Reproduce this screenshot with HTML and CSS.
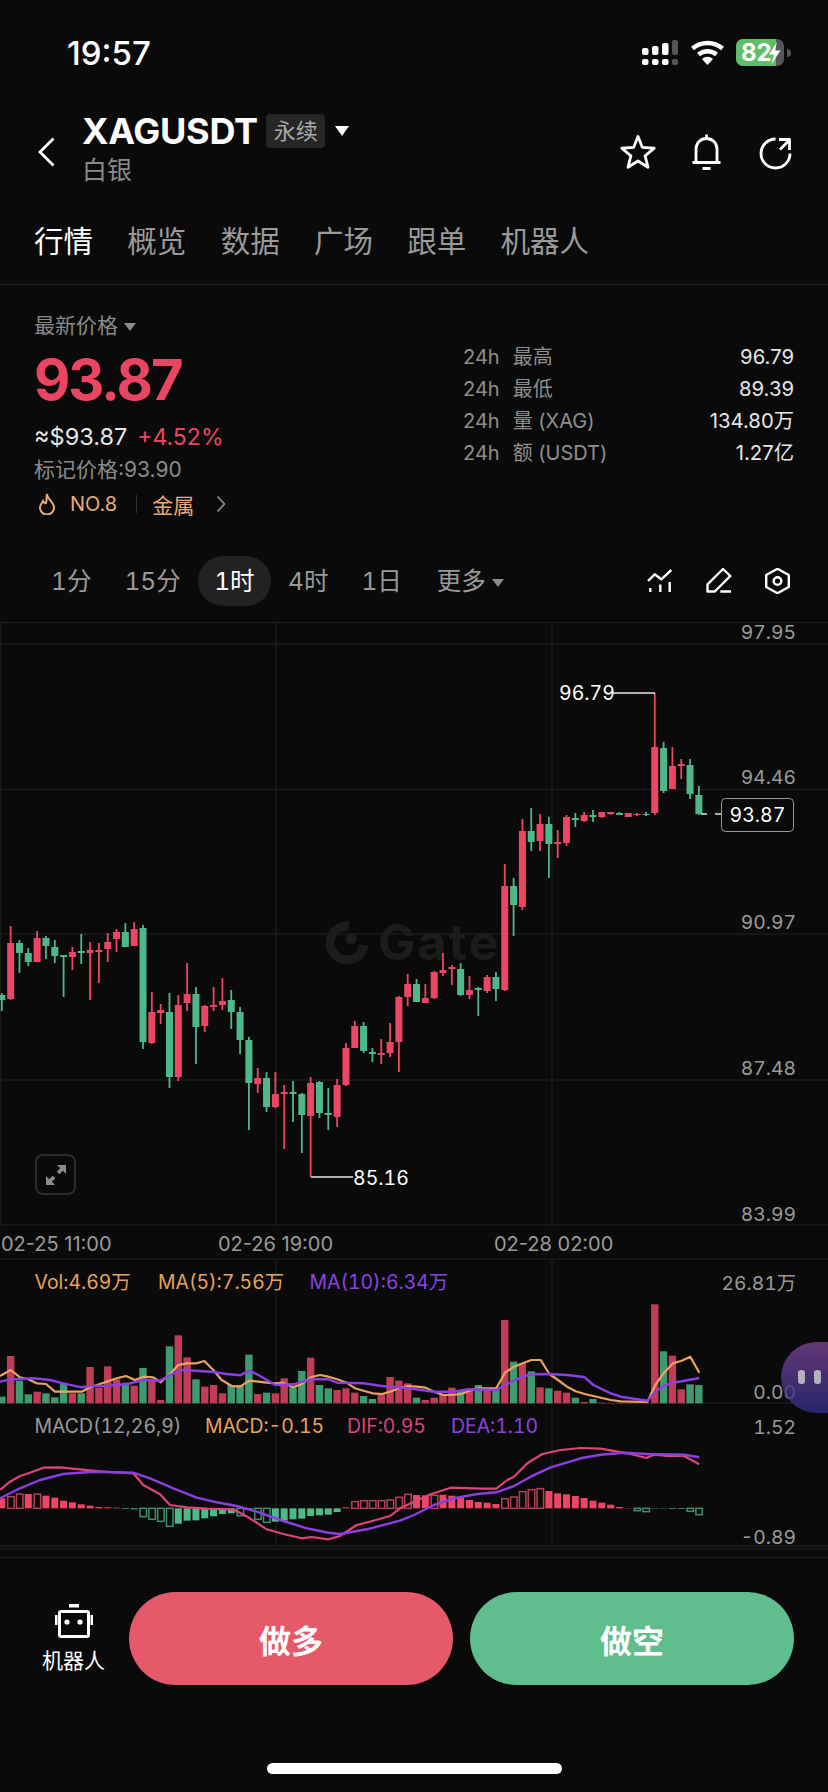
FILE: index.html
```html
<!DOCTYPE html>
<html lang="zh-CN">
<head>
    <meta charset="UTF-8">
    <meta name="viewport" content="width=device-width, initial-scale=1.0">
    <title>XAGUSDT</title>
    <link rel="stylesheet" href="styles.css">
</head>
<body>

    <div class="page">

        <div class="status">
            <span class="time">19:57</span>
            <svg class="status-icons" width="152" height="30" viewBox="640 38 152 30">
                <g fill="#fff">
                    <rect x="642" y="48" width="6.5" height="7" rx="2"/>
                    <rect x="652" y="46" width="6.5" height="9" rx="2"/>
                    <rect x="662" y="43" width="6.5" height="12" rx="2"/>
                    <rect x="642" y="59" width="6.5" height="6" rx="2"/>
                    <rect x="652" y="59" width="6.5" height="6" rx="2"/>
                    <rect x="662" y="59" width="6.5" height="6" rx="2"/>
                </g>
                <g fill="#555">
                    <rect x="672" y="40" width="6" height="15" rx="2"/>
                    <rect x="672" y="59" width="6" height="6" rx="2"/>
                </g>
                <g fill="none" stroke="#fff" stroke-width="4.4">
                    <path d="M692.5 48.5a23 23 0 0 1 30 0"/>
                    <path d="M698.5 54.5a14 14 0 0 1 18 0"/>
                </g>
                <path d="M702 59a8 8 0 0 1 11 0l-5.5 6z" fill="#fff"/>
                <rect x="736" y="39" width="48" height="27" rx="7" fill="#565656"/>
                <path d="M743 39h33v27h-33a7 7 0 0 1-7-7v-13a7 7 0 0 1 7-7z" fill="#62bd69"/>
                <path d="M787 49a4 4 0 0 1 0 8z" fill="#565656"/>
                <text class="batt" x="741" y="61">82</text>
                <path d="M777 42l-8 12.500h5l-2.500 9.500 9-13.500h-5.500z" fill="#fff"/>
            </svg>
        </div>

        <div class="header">
            <svg class="back" width="17" height="30" viewBox="0 0 17 30"><path d="M15.500 1.500L2 15l13.500 13.500" fill="none" stroke="#fff" stroke-width="2.800"/></svg>
            <div class="title-block">
                <div class="title-line">
                    <span class="title">XAGUSDT</span>
                    <span class="tag">永续</span>
                    <span class="caret caret-big"></span>
                </div>
                <div class="subtitle">白银</div>
            </div>
            <div class="actions">
                <svg width="36" height="36" viewBox="0 0 36 36"><path d="M18 2.500L22.400 13.400 34.200 14.250 25.100 21.800 28 33.250 18 27 8 33.250 10.900 21.800 1.800 14.250 13.600 13.400z"/></svg>
                <svg width="36" height="36" viewBox="0 0 36 36"><path d="M7 28.500V15a10.500 10.500 0 0 1 21 0v13.500M3.500 28.500h28M17.500 0.500V4.500M13.500 34.500h8"/></svg>
                <svg width="36" height="36" viewBox="0 0 36 36"><path d="M17.500 5A14.500 14.500 0 1 0 32 19.500M22 15.500L31.500 6M21 5.500h10.500V16"/></svg>
            </div>
        </div>

        <div class="tabs">
            <span class="tab active">行情</span>
            <span class="tab">概览</span>
            <span class="tab">数据</span>
            <span class="tab">广场</span>
            <span class="tab">跟单</span>
            <span class="tab">机器人</span>
        </div>

        <div class="summary">
            <div class="price-col">
                <div class="price-label">最新价格 <span class="caret"></span></div>
                <div class="price">93.87</div>
                <div class="price-sub"><span>≈$93.87</span><span class="red">+4.52%</span></div>
                <div class="mark">标记价格:93.90</div>
                <div class="hot">
                    <svg width="18" height="22" viewBox="0 0 18 22"><path d="M9 1C9 6 16 9 16 14.500A7 7 0 0 1 2 14.500C2 12 4 10 5 8C6 10 7 10.500 8 10C9 7 8 4 9 1Z" fill="none" stroke="#e8ab78" stroke-width="2"/></svg>
                    <span class="no">NO.8</span>
                    <span class="sep"></span>
                    <span class="cat">金属</span>
                    <svg class="hot-arrow" width="10" height="18" viewBox="0 0 10 18"><path d="M1.500 1.500L8.500 9l-7 7.500" fill="none" stroke="#8a8a8a" stroke-width="1.800"/></svg>
                </div>
            </div>
            <div class="stats">
                <div class="stat"><span class="stat-key"><i>24h</i>最高</span><span>96.79</span></div>
                <div class="stat"><span class="stat-key"><i>24h</i>最低</span><span>89.39</span></div>
                <div class="stat"><span class="stat-key"><i>24h</i>量 (XAG)</span><span>134.80万</span></div>
                <div class="stat"><span class="stat-key"><i>24h</i>额 (USDT)</span><span>1.27亿</span></div>
            </div>
        </div>

        <div class="periods">
            <span class="period">1分</span>
            <span class="period">15分</span>
            <span class="period active">1时</span>
            <span class="period">4时</span>
            <span class="period">1日</span>
            <span class="period period-more">更多 <span class="caret"></span></span>
            <div class="tools">
                <svg width="26" height="26" viewBox="0 0 26 26"><path d="M1 13L7.700 6.300 14.300 11.300 24.300 2M3.300 20v4M13.300 16.500V24M22.700 14v10"/></svg>
                <svg width="26" height="26" viewBox="0 0 26 26"><path d="M1.500 23V16.300L17 1 24.300 8 8.800 23.500H1.500zM14.300 23.500H25"/></svg>
                <svg width="26" height="26" viewBox="0 0 26 26"><path d="M12.500 0.800L23.800 7V19L12.500 25.200 1.200 19V7z"/><circle cx="12.500" cy="13" r="3.800"/></svg>
            </div>
        </div>

        <div class="chart">
            <svg id="chart" width="828" height="936" viewBox="0 622 828 936">
                <g id="grid"></g>
                <g class="watermark">
                    <path d="M349 926A17 17 0 1 0 364 945" fill="none" stroke="#1c1c1c" stroke-width="9"/>
                    <circle cx="351" cy="939" r="5.500" fill="#1c1c1c"/>
                    <text x="378" y="960">Gate</text>
                </g>
                <g id="candles"></g>
                <g id="volume"></g>
                <g id="macd"></g>

                <path class="marker" d="M613 693H655M311 1177H353"/>
                <path class="marker dashed" d="M701 814H721"/>
                <text class="mark-val" x="559" y="700">96.79</text>
                <text class="mark-val" x="353" y="1185">85.16</text>
                <rect class="last-box" x="721.500" y="798.500" width="72" height="33" rx="4"/>
                <text class="mark-val middle" x="757.500" y="822">93.87</text>

                <text class="axis" x="796" y="639">97.95</text>
                <text class="axis" x="796" y="784">94.46</text>
                <text class="axis" x="796" y="929">90.97</text>
                <text class="axis" x="796" y="1075">87.48</text>
                <text class="axis" x="796" y="1221">83.99</text>
                <text class="axis date" x="1" y="1251">02-25 11:00</text>
                <text class="axis date" x="218" y="1251">02-26 19:00</text>
                <text class="axis date" x="494" y="1251">02-28 02:00</text>

                <text class="legend orange" x="34.500" y="1289">Vol:4.69万</text>
                <text class="legend orange" x="158" y="1289">MA(5):7.56万</text>
                <text class="legend purple" x="309.500" y="1289">MA(10):6.34万</text>
                <text class="axis" x="796" y="1290">26.81万</text>
                <text class="axis" x="796" y="1399">0.00</text>

                <text class="legend gray" x="34.500" y="1433">MACD(12,26,9)</text>
                <text class="legend orange" x="205" y="1433">MACD:-0.15</text>
                <text class="legend pink" x="347" y="1433">DIF:0.95</text>
                <text class="legend purple" x="451" y="1433">DEA:1.10</text>
                <text class="axis" x="796" y="1434">1.52</text>
                <text class="axis" x="796" y="1544">-0.89</text>
            </svg>

            <div class="expand">
                <svg width="22" height="22" viewBox="0 0 22 22" fill="#8c8c8c">
                    <path d="M21 1v9l-3.200-3.200-3.400 3.400-2.600-2.600 3.400-3.400L12 1z"/>
                    <path d="M1 21v-9l3.200 3.200 3.400-3.400 2.600 2.600-3.400 3.400L10 21z"/>
                </svg>
            </div>

            <div class="bubble"><span></span><span></span></div>
        </div>

        <div class="bottom">
            <div class="robot">
                <svg width="40" height="34" viewBox="0 0 40 34">
                    <rect x="15" y="0" width="10" height="3.500" fill="#fff"/>
                    <rect x="5.500" y="7.500" width="29" height="25" rx="1.500" fill="none" stroke="#fff" stroke-width="3"/>
                    <rect x="1" y="11" width="2.500" height="10" fill="#fff"/>
                    <rect x="36.500" y="11" width="2.500" height="10" fill="#fff"/>
                    <circle cx="13" cy="18" r="2.600" fill="#fff"/>
                    <circle cx="26" cy="18" r="2.600" fill="#fff"/>
                </svg>
                <span>机器人</span>
            </div>
            <button class="trade long">做多</button>
            <button class="trade short">做空</button>
        </div>

        <div class="home-bar"></div>
    </div>

    <script src="chart.js"></script>
</body>
</html>
```

FILE: styles.css
```css
* {
    box-sizing: border-box;
}

body {
    margin: 0;
    background-color: #0a0a0a;
    color: #fff;
    font-family: Inter, "Noto Sans CJK SC", sans-serif;
    overflow: hidden;
}

.page {
    width: 828px;
    height: 1792px;
    overflow: hidden;
    display: flex;
    flex-direction: column;
}

.red {
    color: #ea4663;
}

.caret {
    display: inline-block;
    width: 0;
    height: 0;
    border-left: 6px solid transparent;
    border-right: 6px solid transparent;
    border-top: 8px solid #8c8c8c;
    vertical-align: middle;
}

.caret-big {
    border-left-width: 7.5px;
    border-right-width: 7.5px;
    border-top: 10px solid #fff;
    margin-left: 10px;
}

/* status bar */
.status {
    height: 106px;
    display: flex;
    align-items: center;
    justify-content: space-between;
    padding: 0 36px 0 67px;
}

.time {
    font-size: 33px;
    font-weight: 500;
}

.batt {
    font-size: 24px;
    font-weight: 700;
    fill: #fff;
}

/* header */
.header {
    height: 92px;
    display: flex;
    align-items: center;
    padding: 0 34px 0 38px;
}

.back {
    margin-right: 27px;
}

.title-block {
    margin-bottom: 4px;
}

.title-line {
    height: 40px;
    display: flex;
    align-items: center;
}

.title {
    font-size: 36px;
    font-weight: 700;
    letter-spacing: -0.3px;
}

.tag {
    height: 34px;
    width: 59px;
    margin-left: 8.500px;
    background-color: #262626;
    border-radius: 4px;
    color: #aaa;
    font-size: 22px;
    line-height: 34px;
    text-align: center;
}

.subtitle {
    height: 38px;
    line-height: 38px;
    color: #8a8a8a;
    font-size: 25px;
}

.actions {
    margin-left: auto;
    display: flex;
    gap: 33px;
}

.actions svg {
    fill: none;
    stroke: #fff;
    stroke-width: 2.8;
    stroke-linejoin: round;
}

/* tabs */
.tabs {
    height: 87px;
    display: flex;
    align-items: center;
    gap: 34.300px;
    padding: 0 0 4px 34px;
    border-bottom: 1px solid #232323;
}

.tab {
    color: #9a9a9a;
    font-size: 29.500px;
}

.tab.active {
    color: #fff;
}

/* price summary */
.summary {
    display: flex;
    justify-content: space-between;
    padding: 26px 34px 0 34px;
}

.price-label {
    height: 30px;
    line-height: 30px;
    color: #8a8a8a;
    font-size: 21px;
}

.price {
    height: 64px;
    margin-top: 7px;
    line-height: 64px;
    color: #ea4663;
    font-size: 56px;
    font-weight: 700;
    letter-spacing: -2px;
}

.price-sub {
    height: 32px;
    margin-top: 9px;
    line-height: 32px;
    color: #e6e6e6;
    font-size: 23.500px;
    display: flex;
    gap: 10px;
}

.price-sub .red {
    font-size: 23px;
}

.mark {
    height: 30px;
    margin-top: 2px;
    line-height: 30px;
    color: #8a8a8a;
    font-size: 21px;
}

.hot {
    height: 30px;
    margin-top: 4px;
    padding-left: 4px;
    display: flex;
    align-items: center;
    color: #e8ab78;
    font-size: 20px;
}

.no {
    margin-left: 14px;
}

.sep {
    width: 1px;
    height: 18px;
    margin: 0 15px 0 19px;
    background-color: #333;
}

.cat {
    font-size: 21px;
}

.hot-arrow {
    margin-left: 22px;
}

.stats {
    width: 331px;
    padding-top: 30px;
}

.stat {
    height: 32px;
    line-height: 32px;
    display: flex;
    justify-content: space-between;
    color: #e6e6e6;
    font-size: 20.300px;
}

.stat-key {
    color: #8f8f8f;
    font-size: 20px;
}

.stat-key i {
    font-style: normal;
    margin-right: 13px;
}

/* period row */
.periods {
    height: 50px;
    margin-top: 37px;
    margin-bottom: 16px;
    padding: 0 37px 0 35px;
    display: flex;
    align-items: center;
    gap: 1px;
}

.period {
    height: 50px;
    padding: 0 16px;
    line-height: 50px;
    border-radius: 25px;
    color: #9a9a9a;
    font-size: 24.500px;
    font-variant-numeric: tabular-nums;
    white-space: nowrap;
}

.period.active {
    padding: 0 16.500px;
    background-color: #222;
    color: #fff;
}

.period-more {
    margin-left: 2px;
}

.tools {
    margin-left: auto;
    display: flex;
    gap: 33px;
}

.tools svg {
    fill: none;
    stroke: #fff;
    stroke-width: 2.4;
    stroke-linejoin: round;
}

/* chart */
.chart {
    position: relative;
    height: 936px;
}

#chart {
    display: block;
    overflow: visible;
}

#chart text {
    font-family: Inter, "Noto Sans CJK SC", sans-serif;
    font-variant-numeric: tabular-nums;
}

.grid-line {
    stroke: #1b1b1b;
    stroke-width: 1.5;
}

.watermark text {
    fill: #1c1c1c;
    font-size: 50px;
    font-weight: 700;
    letter-spacing: 2px;
}

.wick {
    stroke-width: 1.800;
}

.up {
    fill: #4fb88b;
    stroke: #4fb88b;
}

.down {
    fill: #ec4664;
    stroke: #ec4664;
}

.body {
    stroke: none;
}

.vol-up {
    fill: #3f9a72;
}

.vol-down {
    fill: #c03c57;
}

.line {
    fill: none;
    stroke-width: 2.200;
    stroke-linejoin: round;
}

.line-orange {
    stroke: #eba45e;
}

.line-purple {
    stroke: #8b3fe0;
    stroke-width: 2.400;
}

.line-pink {
    stroke: #dc4578;
}

.hollow {
    fill: none;
    stroke-width: 1.500;
}

.hollow-up {
    stroke: #3f8f6c;
}

.hollow-down {
    stroke: #b63f58;
}

.marker {
    fill: none;
    stroke: #e6e6e6;
    stroke-width: 1.500;
}

.dashed {
    stroke-dasharray: 6 8;
}

.mark-val {
    fill: #fff;
    font-size: 19.500px;
}

.middle {
    text-anchor: middle;
}

.last-box {
    fill: #0a0a0a;
    stroke: #999;
    stroke-width: 1;
}

.axis {
    fill: #9a9a9a;
    font-size: 19.300px;
    text-anchor: end;
}

#chart .axis.date {
    font-size: 20px;
    font-variant-numeric: normal;
    text-anchor: start;
}

.legend {
    font-size: 19.400px;
}

.orange {
    fill: #e8a35f;
}

.purple {
    fill: #8b44e0;
}

.gray {
    fill: #9a9a9a;
}

.pink {
    fill: #d8447c;
}

.expand {
    position: absolute;
    left: 35px;
    top: 532px;
    width: 41px;
    height: 41px;
    border: 2px solid #2c2c2c;
    border-radius: 8px;
    display: flex;
    align-items: center;
    justify-content: center;
}

.bubble {
    position: absolute;
    left: 781px;
    top: 720px;
    width: 47px;
    height: 71px;
    border-radius: 36px 0 0 36px;
    background: linear-gradient(#7a4390, #2e2e80);
    opacity: 0.8;
    padding: 28px 0 0 17px;
    display: flex;
    gap: 9px;
}

.bubble span {
    width: 7px;
    height: 14px;
    border-radius: 3px;
    background-color: #e0dbea;
}

/* bottom bar */
.bottom {
    padding: 34px 34px 0;
    display: flex;
    align-items: center;
    gap: 17px;
}

.robot {
    width: 79px;
    margin-right: -1px;
    display: flex;
    flex-direction: column;
    align-items: center;
    gap: 6px;
    font-size: 21px;
}

.trade {
    flex: 1;
    height: 93px;
    border: none;
    border-radius: 47px;
    color: #fff;
    font-family: inherit;
    font-size: 32px;
    font-weight: 700;
}

.long {
    background-color: #e5596a;
}

.short {
    background-color: #60bd8c;
}

.home-bar {
    width: 295px;
    height: 11px;
    margin: 78px auto 0;
    background-color: #fff;
    border-radius: 6px;
}
```

FILE: chart.js
```js
const NS = 'http://www.w3.org/2000/svg';

function add(parentId, tag, attrs) {
    const el = document.createElementNS(NS, tag);
    for (const key in attrs) {
        el.setAttribute(key, attrs[key]);
    }
    document.getElementById(parentId).appendChild(el);
}

// every candle sits on the same step, 8.82px apart
function slotX(i) {
    return (5.5 + 26.47 * i) / 3;
}

// grid
const hLines = [622.5, 644, 789.5, 934, 1080, 1225, 1259, 1403, 1546, 1549, 1557.5];
hLines.forEach(y => add('grid', 'line', { class: 'grid-line', x1: 0, x2: 828, y1: y, y2: y }));
[276, 552].forEach(x => {
    add('grid', 'line', { class: 'grid-line', x1: x, x2: x, y1: 622, y2: 1225 });
    add('grid', 'line', { class: 'grid-line', x1: x, x2: x, y1: 1259, y2: 1546 });
});
add('grid', 'line', { class: 'grid-line', x1: 0.5, x2: 0.5, y1: 622, y2: 1225 });

// candles: dir, high, body top, body bottom, low
const candles = [
    ['u', 993, 995, 1000, 1011], ['d', 926, 943, 999, 1000], ['u', 940, 943, 953, 973], ['u', 948, 953, 962, 966],
    ['d', 931, 938, 962, 962], ['u', 936, 938, 946, 959], ['u', 940, 947, 956, 963], ['u', 955, 955, 957, 997],
    ['d', 947, 952, 957, 970], ['u', 934, 951, 953, 964], ['d', 942, 950, 953, 1000], ['d', 943, 950, 952, 983],
    ['d', 933, 942, 949, 962], ['d', 929, 932, 939, 952], ['u', 923, 932, 947, 947], ['d', 922, 929, 946, 946],
    ['u', 925, 928, 1042, 1049], ['d', 992, 1012, 1043, 1044], ['d', 1004, 1010, 1013, 1024], ['u', 993, 1012, 1077, 1088],
    ['d', 995, 1005, 1077, 1081], ['d', 963, 994, 1003, 1011], ['u', 987, 994, 1027, 1064], ['d', 1005, 1006, 1026, 1032],
    ['d', 987, 1005, 1007, 1011], ['d', 978, 1001, 1005, 1010], ['u', 990, 1000, 1012, 1029], ['u', 1007, 1012, 1040, 1054],
    ['u', 1037, 1040, 1083, 1130], ['d', 1068, 1078, 1084, 1093], ['u', 1072, 1078, 1107, 1112], ['d', 1072, 1094, 1107, 1108],
    ['d', 1085, 1092, 1094, 1149], ['u', 1081, 1092, 1094, 1122], ['u', 1093, 1094, 1115, 1153], ['d', 1077, 1083, 1116, 1177],
    ['u', 1081, 1082, 1113, 1118], ['u', 1088, 1113, 1115, 1130], ['d', 1079, 1085, 1117, 1127], ['d', 1043, 1048, 1085, 1086],
    ['d', 1021, 1026, 1048, 1048], ['u', 1022, 1026, 1051, 1053], ['u', 1048, 1052, 1054, 1062], ['d', 1039, 1053, 1055, 1064],
    ['d', 1023, 1042, 1053, 1057], ['d', 996, 997, 1042, 1072], ['d', 974, 984, 997, 1006], ['u', 979, 984, 1002, 1002],
    ['d', 984, 998, 1003, 1003], ['d', 971, 972, 998, 999], ['d', 953, 970, 973, 976], ['d', 965, 967, 969, 985],
    ['u', 963, 969, 995, 996], ['d', 976, 990, 995, 999], ['u', 987, 988, 990, 1016], ['d', 975, 977, 991, 993],
    ['u', 972, 977, 989, 1001], ['d', 864, 886, 990, 991], ['u', 878, 886, 905, 936], ['d', 819, 831, 907, 910],
    ['u', 808, 831, 842, 851], ['d', 814, 824, 841, 851], ['u', 817, 824, 844, 878], ['d', 830, 842, 844, 858],
    ['d', 815, 817, 843, 846], ['u', 813, 818, 820, 827], ['d', 812, 815, 821, 822], ['u', 810, 815, 817, 822],
    ['d', 812, 812, 817, 818], ['d', 812, 812, 814, 815], ['u', 812, 813, 815, 815], ['d', 813, 813, 817, 817],
    ['d', 813, 814, 815, 816], ['u', 812, 814, 815, 816], ['d', 693, 747, 813, 815], ['u', 742, 748, 791, 793],
    ['d', 747, 766, 789, 789], ['d', 759, 764, 766, 779], ['u', 759, 765, 794, 799], ['u', 786, 795, 814, 815]
];
candles.forEach((c, i) => {
    const cls = c[0] === 'u' ? 'up' : 'down';
    const x = slotX(i);
    add('candles', 'line', { class: 'wick ' + cls, x1: x, x2: x, y1: c[1], y2: c[4] });
    add('candles', 'rect', { class: 'body ' + cls, x: x - 3.5, width: 7, y: c[2], height: c[3] - c[2] });
});

// volume panel, values are bar tops in 1/3px below the y=1250 origin
const toY = z => 1250 + z / 3;
const volume = [
    'u440', 'd318', 'u392', 'u433', 'd425', 'u430', 'u442', 'u400', 'd430', 'u430',
    'd351', 'd413', 'd349', 'd388', 'u398', 'd407', 'u354', 'd392', 'd450', 'u289',
    'd256', 'd322', 'u388', 'd410', 'd405', 'd430', 'u405', 'u405', 'u314', 'd432',
    'u428', 'd430', 'd385', 'u412', 'u363', 'd323', 'u405', 'u415', 'd420', 'd415',
    'd428', 'u438', 'u447', 'd432', 'd381', 'd392', 'd400', 'u443', 'd450', 'd443',
    'd433', 'd413', 'u420', 'd415', 'u405', 'd417', 'u417', 'd210', 'u335', 'd340',
    'u364', 'd412', 'u415', 'd422', 'd428', 'u443', 'd456', 'u447', 'd458', 'd459',
    'd459', 'd459', 'd459', 'd459', 'd163', 'u304', 'd317', 'd418', 'u403', 'u405'
];
volume.forEach((v, i) => {
    const top = toY(Number(v.slice(1)));
    add('volume', 'rect', {
        class: v[0] === 'u' ? 'vol-up' : 'vol-down',
        x: slotX(i) - 3.7, width: 7.4, y: top, height: toY(460) - top
    });
});

function polyline(parentId, cls, left, right) {
    const shifted = [];
    for (let i = 0; i < right.length; i += 2) {
        shifted.push(right[i] + 1242, right[i + 1]);
    }
    const all = left.concat(shifted);
    const pts = [];
    for (let i = 0; i < all.length; i += 2) {
        pts.push((all[i] / 3).toFixed(1) + ',' + toY(all[i + 1]).toFixed(1));
    }
    add(parentId, 'polyline', { class: 'line ' + cls, points: pts.join(' ') });
}

polyline('volume', 'line-orange',
    [0, 378, 32, 360, 60, 382, 85, 388, 110, 400, 138, 402, 165, 425, 190, 425, 245, 425, 270, 412, 300, 402, 350, 385, 378, 378, 405, 390, 430, 380, 460, 382, 482, 397, 510, 372, 535, 345, 560, 340, 590, 340, 613, 333, 640, 360, 665, 390, 695, 408, 720, 410, 748, 392, 775, 395, 800, 398, 826, 400, 850, 398, 880, 412, 905, 402, 932, 382, 960, 375, 985, 380, 1012, 388, 1040, 398, 1065, 415, 1090, 422, 1118, 430, 1145, 432, 1170, 425, 1197, 415, 1225, 408],
    [8, 410, 35, 413, 60, 425, 88, 435, 115, 435, 141, 432, 167, 422, 194, 415, 247, 415, 273, 368, 300, 350, 326, 340, 352, 330, 380, 330, 406, 372, 432, 390, 459, 410, 485, 424, 512, 432, 538, 438, 590, 450, 620, 454, 700, 456, 724, 405, 750, 368, 777, 340, 803, 332, 829, 320, 856, 368]);
polyline('volume', 'line-purple',
    [0, 395, 32, 388, 60, 387, 100, 385, 150, 390, 190, 400, 245, 412, 270, 408, 320, 408, 378, 403, 430, 390, 480, 392, 510, 375, 545, 360, 590, 362, 640, 366, 680, 372, 720, 376, 748, 362, 775, 375, 826, 405, 880, 403, 932, 388, 985, 388, 1012, 398, 1090, 400, 1145, 408, 1225, 415],
    [0, 417, 60, 425, 115, 425, 167, 418, 247, 420, 273, 405, 300, 392, 326, 380, 352, 373, 406, 372, 459, 375, 485, 378, 512, 382, 538, 405, 590, 430, 620, 440, 700, 452, 724, 425, 750, 408, 777, 398, 803, 394, 856, 384]);

// macd histogram: value is the bar end, "h" marks a hollow bar
const ZERO = 775;
const macdBars = [
    [745], [740, 'h'], [732, 'h'], [732], [732, 'h'], [737], [743], [752], [757], [763],
    [767], [771], [772], [773], [777], [778], [800, 'h'], [808, 'h'], [814, 'h'], [829, 'h'],
    [821], [812], [811], [805], [799], [792], [790], [797, 'h'], [780], [808, 'h'],
    [817, 'h'], [815], [812], [808], [806], [798], [796], [794], [786], [772],
    [755, 'h'], [752, 'h'], [752, 'h'], [752, 'h'], [750, 'h'], [742, 'h'], [733, 'h'], [735], [736], [736, 'h'],
    [734], [737], [742], [750], [756], [758], [762], [746, 'h'], [741, 'h'], [725, 'h'],
    [719, 'h'], [716, 'h'], [723], [730], [733], [738], [744], [752], [758], [764],
    [771], [774], [782, 'h'], [785, 'h'], [776], [776], [777], [777], [784, 'h'], [794, 'h']
];
macdBars.forEach((b, i) => {
    const up = b[0] > ZERO;
    const top = toY(Math.min(b[0], ZERO));
    const height = Math.abs(b[0] - ZERO) / 3;
    const x = slotX(i) - 3.5;
    if (b[1]) {
        add('macd', 'rect', { class: 'hollow ' + (up ? 'hollow-up' : 'hollow-down'), x: x + 0.5, width: 6.5, y: top, height: height });
    } else {
        add('macd', 'rect', { class: 'body ' + (up ? 'up' : 'down'), x: x, width: 7, y: top, height: height });
    }
});

polyline('macd', 'line-pink',
    [0, 720, 30, 695, 60, 678, 90, 668, 130, 653, 180, 652, 240, 658, 300, 664, 350, 667, 400, 670, 430, 705, 480, 733, 510, 765, 560, 772, 620, 776, 700, 778, 750, 805, 800, 838, 850, 852, 905, 865, 935, 861, 985, 868, 1020, 858, 1070, 825, 1120, 812, 1170, 798, 1200, 775],
    [0, 755, 50, 733, 110, 713, 200, 716, 247, 716, 280, 690, 300, 680, 340, 640, 385, 612, 440, 600, 500, 594, 560, 596, 640, 610, 697, 624, 720, 614, 760, 618, 810, 618, 856, 643]);
polyline('macd', 'line-purple',
    [0, 745, 60, 715, 120, 690, 190, 672, 280, 665, 400, 668, 450, 685, 520, 715, 590, 743, 650, 757, 710, 768, 770, 785, 850, 813, 920, 835, 985, 848, 1020, 852, 1100, 838, 1200, 812],
    [0, 795, 60, 765, 120, 745, 190, 732, 247, 727, 300, 708, 350, 680, 410, 652, 500, 625, 560, 614, 630, 608, 700, 612, 810, 614, 856, 622]);
```
